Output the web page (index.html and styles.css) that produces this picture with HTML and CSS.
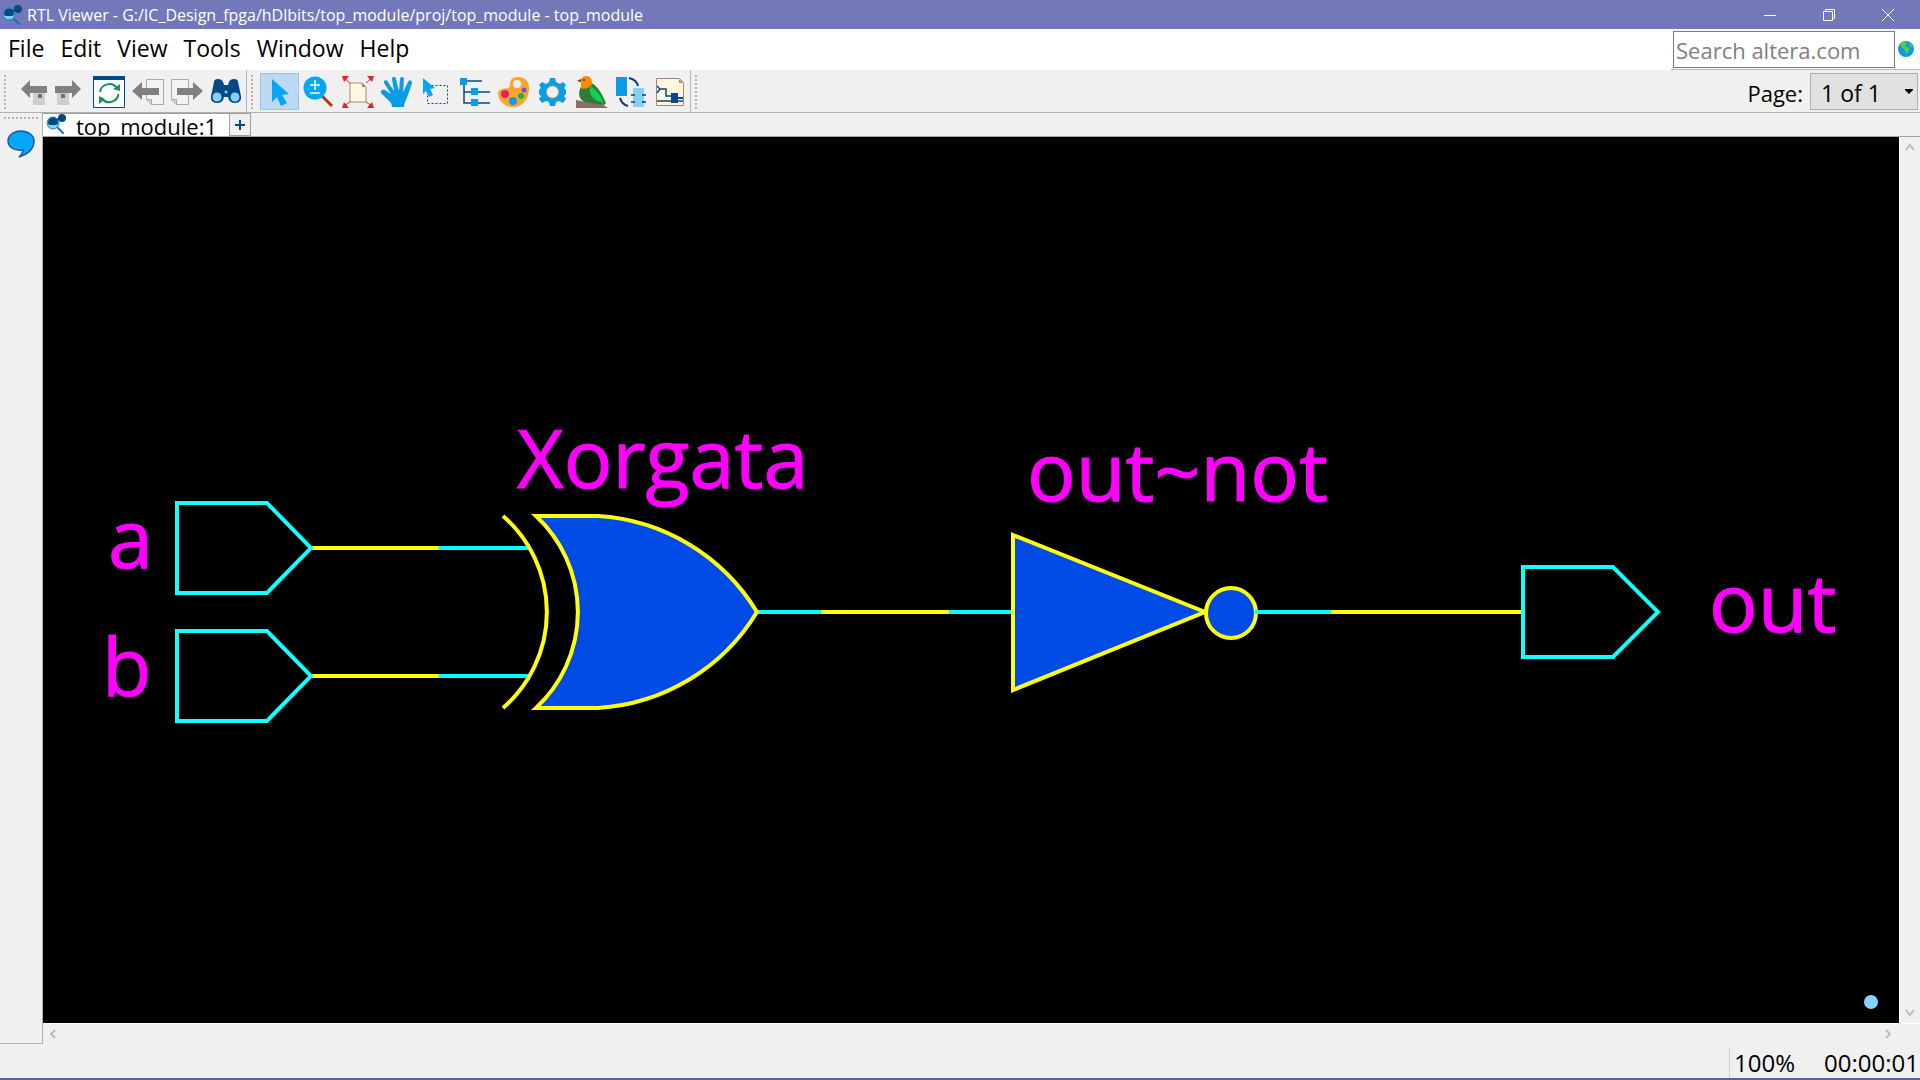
FILE: index.html
```html
<!DOCTYPE html>
<html lang="en">
<head>
    <meta charset="UTF-8">
    <meta name="viewport" content="width=device-width, initial-scale=1.0">
    <title>RTL Viewer</title>
    <link rel="stylesheet" href="styles.css">
</head>
<body>
    <!-- shared icon -->
    <svg class="defs" width="0" height="0">
        <symbol id="viewer" viewBox="0 0 20 20">
            <path d="M11 13l6 6" stroke="#1f6fb0" stroke-width="2" stroke-linecap="round"/>
            <circle cx="7" cy="9" r="6" fill="#7fd0f7" stroke="#1c80c4" stroke-width="1"/>
            <path d="M2 9a5 5 0 0 1 10-1q0 3-2 3H4q-2 0-2-2z" fill="#044a86"/>
            <path d="M11 6l5-3" stroke="#044a86" stroke-width="2"/>
            <circle cx="16" cy="4" r="4" fill="#044a86"/>
        </symbol>
    </svg>

    <header class="titlebar">
        <svg class="app-icon"><use href="#viewer"/></svg>
        <h1>RTL Viewer - G:/IC_Design_fpga/hDlbits/top_module/proj/top_module - top_module</h1>
        <div class="window-btns">
            <button aria-label="Minimize"><svg viewBox="0 0 14 14"><path d="M1 7.500h12"/></svg></button>
            <button aria-label="Restore"><svg viewBox="0 0 14 14"><path d="M1.500 3.500h9v9h-9zM3.500 3.500v-2h9v9h-2"/></svg></button>
            <button aria-label="Close"><svg viewBox="0 0 14 14"><path d="M1 1l12 12M13 1L1 13"/></svg></button>
        </div>
    </header>

    <div class="menubar">
        <nav>
            <button>File</button>
            <button>Edit</button>
            <button>View</button>
            <button>Tools</button>
            <button>Window</button>
            <button>Help</button>
        </nav>
        <div class="search">
            <input type="text" placeholder="Search altera.com" aria-label="Search altera.com">
            <button aria-label="Search">
                <svg viewBox="0 0 16 16">
                    <circle cx="8" cy="8" r="8" fill="#0d9be8"/>
                    <path d="M4 1l4 0 1 2-2 1 1 2-2-1 3 1 3 2-2 3-2 2-1-4-3-2-2-4z" fill="#5cc940"/>
                    <path d="M11 2l3 2 1 3-2-1-2-2z" fill="#5cc940"/>
                </svg>
            </button>
        </div>
    </div>

    <div class="toolbar">
        <div class="tool-group">
            <span class="handle"></span>
            <button class="tool small" aria-label="Undo">
                <svg viewBox="0 0 32 32">
                    <path d="M15 14h12v15H15z" fill="#cfcfcf"/>
                    <path d="M3 13l9-9v6h17v7H12v5z" fill="#808080"/>
                    <path d="M17 17h10v10H17z" fill="#cfcfcf"/><path d="M20 18h4v4h-4z" fill="#707070"/>
                </svg>
            </button>
            <button class="tool small" aria-label="Redo">
                <svg viewBox="0 0 32 32">
                    <path d="M5 14h12v15H5z" fill="#cfcfcf"/>
                    <path d="M29 13l-9-9v6H3v7h17v5z" fill="#808080"/>
                    <path d="M6 17h10v10H6z" fill="#cfcfcf"/><path d="M9 18h4v4H9z" fill="#707070"/>
                </svg>
            </button>
            <span class="spacer"></span>
            <button class="tool" aria-label="Refresh">
                <svg viewBox="0 0 32 32">
                    <path d="M.5.500h31v31H.5z" fill="#fff" stroke="#044a86"/>
                    <path d="M0 0h32v4H0z" fill="#044a86"/>
                    <path d="M7 16a9.500 9.500 0 0 1 17-4M9 23a9.500 9.500 0 0 0 16.500-5" fill="none" stroke="#149650" stroke-width="2"/>
                    <path d="M27 8v7l-7-2zM6 28v-8l6 3z" fill="#149650"/>
                </svg>
            </button>
            <button class="tool" aria-label="Previous page">
                <svg viewBox="0 0 32 32">
                    <path d="M14.500 3.500h17v25H19l-4.500-5z" fill="#f3f3f3" stroke="#a8a8a8"/>
                    <path d="M14.500 23.500l5 0v5" fill="#d0d0d0" stroke="#a8a8a8"/>
                    <path d="M0 15l10-9v6h17v7H10v5z" fill="#808080"/>
                </svg>
            </button>
            <button class="tool" aria-label="Next page">
                <svg viewBox="0 0 32 32">
                    <path d="M.5 3.500h17v25H5l-4.500-5z" fill="#f3f3f3" stroke="#a8a8a8"/>
                    <path d="M.5 23.500h5v5" fill="#d0d0d0" stroke="#a8a8a8"/>
                    <path d="M32 15l-10-9v6H6v7h16v5z" fill="#808080"/>
                </svg>
            </button>
            <button class="tool" aria-label="Find">
                <svg viewBox="0 0 32 32">
                    <path d="M4 6q0-3 4-3t5 3l1 3h4l1-3q1-3 5-3t4 3l3 14q1 7-6 7-6 0-7-6h-4q-1 6-7 6-7 0-6-7z" fill="#044a86"/>
                    <circle cx="7" cy="21" r="4.500" fill="#86d0f5"/><circle cx="25" cy="21" r="4.500" fill="#86d0f5"/>
                    <circle cx="16" cy="16" r="1.500" fill="#86d0f5"/>
                </svg>
            </button>
        </div>
        <div class="tool-group">
            <span class="handle"></span>
            <button class="tool active" aria-label="Selection tool" aria-pressed="true">
                <svg viewBox="0 0 32 32"><path d="M8 3l17 15-7 1 5 8-6 3-4-9-5 5z" fill="#06a6f7"/></svg>
            </button>
            <button class="tool" aria-label="Zoom tool">
                <svg viewBox="0 0 32 32">
                    <path d="M19 20l10 10" stroke="#b33c0e" stroke-width="3"/>
                    <circle cx="12" cy="12" r="11.500" fill="#06a6f7"/>
                    <path d="M12 4v10M7 9h10M7 17h10" stroke="#fff" stroke-width="1.500"/>
                </svg>
            </button>
            <button class="tool" aria-label="Fit in window">
                <svg viewBox="0 0 32 32">
                    <path d="M8 7h12l4 4v15H8z" fill="#fff8dc" stroke="#a1887f"/>
                    <path d="M20 7v4h4z" fill="#a1887f"/>
                    <path d="M8 7L2 2M24 7l6-5M8 26l-6 4M24 26l6 4" stroke="#e3222a"/>
                    <path d="M0 0h7L2 6zM32 0h-7l5 6zM0 32h7l-5-6zM32 32h-7l5-6z" fill="#e3222a"/>
                </svg>
            </button>
            <button class="tool" aria-label="Hand tool">
                <svg viewBox="0 0 32 32">
                    <path d="M11 31c0-4-2-5-5-8l-6-6c-1-3 2-4 4-3l6 4L3 7c-1-3 3-4 4-1l6 9-2-12c0-3 4-3 4 0l3 12 1-12c1-3 4-2 4 0l-1 13 5-10c1-3 4-2 4 1l-4 12c-2 5-4 8-4 12z" fill="#0a9de5"/>
                </svg>
            </button>
            <button class="tool" aria-label="Area selection">
                <svg viewBox="0 0 32 32">
                    <path d="M7.500 9.500h20v18h-20z" fill="none" stroke="#1c3f8c" stroke-dasharray="2 2"/>
                    <path d="M3 2l12 10-5 1 3 6-4 2-3-6-3 3z" fill="#06a6f7"/>
                </svg>
            </button>
            <button class="tool" aria-label="Netlist navigator">
                <svg viewBox="0 0 32 32">
                    <path d="M6 5h17M5 8v19h8M5 16h8M19 16h12M19 27h12" fill="none" stroke="#044a86" stroke-width="1.500"/>
                    <path d="M1 2h7v7H1zM12 12h7v7h-7zM12 23h7v7h-7z" fill="#0a9de5"/>
                </svg>
            </button>
            <button class="tool" aria-label="Color settings">
                <svg viewBox="0 0 32 32">
                    <path d="M4 13c4-1 7 0 8-3 0-4 0-9 8-9 8 0 12 6 11 13-1 10-7 17-15 17C7 31 1 26 0 18c0-3 1-4 4-5z" fill="#fba52c"/>
                    <circle cx="19" cy="8" r="4" fill="#f0f0f0"/>
                    <circle cx="7" cy="18" r="4" fill="#e91e63"/><circle cx="15" cy="25" r="4" fill="#0a9de5"/>
                    <circle cx="23" cy="20" r="3" fill="#1bb53c"/><circle cx="26" cy="14" r="2.500" fill="#7c4ddb"/>
                </svg>
            </button>
            <button class="tool" aria-label="Display settings">
                <svg viewBox="0 0 32 32">
                    <path d="M13 2h5l1 4 4 2 3-2 3 3-2 3 2 2v4l-2 2 2 3-3 4-4-2-3 1-1 4h-5l-1-4-3-1-4 2-3-4 2-3-2-2v-4l2-2-2-3 3-3 4 2 3-2z" fill="#0a9de5"/>
                    <circle cx="15.500" cy="16" r="6" fill="#f2f2f2" stroke="#d9b15b"/>
                </svg>
            </button>
            <button class="tool" aria-label="Bird's eye view">
                <svg viewBox="0 0 32 32">
                    <path d="M0 24c8 1 12 3 20 3 5 0 8 2 12 5H0z" fill="#8d6e63"/>
                    <path d="M6 9c-5 8-4 17 8 18l14 2 2-2C26 18 22 10 15 7z" fill="#2e7d32"/>
                    <path d="M14 10c6 3 11 10 14 17-9-2-16-7-14-17z" fill="#0fd053"/>
                    <path d="M1 5l4-2c2-4 11-5 11 4 0 4-7 7-11 5V6z" fill="#fb8c00"/>
                    <path d="M1 5l4-2v3z" fill="#5d4037"/><circle cx="8" cy="4" r="1" fill="#333"/>
                </svg>
            </button>
            <button class="tool" aria-label="Swap view">
                <svg viewBox="0 0 32 32">
                    <path d="M1 1h11v19H1z" fill="#0a9de5"/><path d="M18 12h11v19H18z" fill="#86d0f5"/>
                    <path d="M14 2c5 1 8 4 9 8M5 22c1 4 4 7 8 8" fill="none" stroke="#053b75" stroke-width="2"/>
                    <path d="M16 19h4M16 26h4M27 19h4M27 26h4" stroke="#053b75" stroke-width="1.500"/>
                </svg>
            </button>
            <button class="tool" aria-label="Schematic">
                <svg viewBox="0 0 32 32">
                    <path d="M2.500 2.500h23l4 4v23h-27z" fill="#fff8dc" stroke="#a1887f"/>
                    <path d="M25 3v4h4z" fill="#a1887f"/>
                    <path d="M3 10l3 3-3 4M6 13h6v7h7M3 25h26" fill="none" stroke="#044a86" stroke-width="1.500"/>
                    <path d="M17 17h7v10h-7zM24 21h5v2h-5z" fill="#044a86"/>
                </svg>
            </button>
        </div>
        <div class="tool-group"><span class="handle"></span></div>
        <div class="page-picker">
            <label for="page">Page:</label>
            <div class="select-box">
                <select id="page">
                    <option>1 of 1</option>
                </select>
                <svg viewBox="0 0 8 5"><path d="M0 0h8v1L4 5 0 1z"/></svg>
            </div>
        </div>
    </div>

    <main class="main">
        <aside class="dock">
            <span class="dock-handle"></span>
            <button aria-label="Messages">
                <svg viewBox="0 0 28 28">
                    <path d="M14 1c7 0 13 4 13 10 0 8-6 13-15 16 3-3 4-5 4-7C7 21 1 17 1 11 1 5 7 1 14 1z" fill="#06a6f7" stroke="#1858a8" stroke-width="1.500"/>
                </svg>
            </button>
        </aside>

        <section class="workspace">
            <div class="tabs">
                <button class="tab"><svg><use href="#viewer"/></svg><span>top_module:1</span></button>
                <button class="tab-add" aria-label="New tab"><svg viewBox="0 0 10 10"><path d="M5 0v10M0 5h10"/></svg></button>
            </div>
            <div class="view">
                <svg class="schematic" viewBox="43 137 1856 886">
                    <!-- wires -->
                    <path class="net" d="M311 548H439M311 676H439M821 612H949M1331 612H1523"/>
                    <path class="stub" d="M439 548H528M439 676H528M757 612H821M949 612H1013M1256 612H1331"/>
                    <!-- ports -->
                    <path class="port" d="M177 503H267L311 548L267 593H177Z"/>
                    <path class="port" d="M177 631H267L311 676L267 721H177Z"/>
                    <path class="port" d="M1523 567H1613L1658 612L1613 657H1523Z"/>
                    <!-- xor -->
                    <path class="arc" d="M503 516A127 127 0 0 1 503 708"/>
                    <path class="gate" d="M536 516H598A200 200 0 0 1 757 612A200 200 0 0 1 598 708H536A131 131 0 0 0 536 516Z"/>
                    <!-- inverter -->
                    <path class="gate" d="M1013 535L1205 612L1013 690Z"/>
                    <circle class="gate" cx="1231" cy="613" r="25"/>
                    <path class="stub" d="M1255 612H1262"/>
                    <!-- labels -->
                    <text x="108" y="568">a</text>
                    <text x="102" y="696">b</text>
                    <text x="517" y="488">Xorgata</text>
                    <text x="1027" y="501">out~not</text>
                    <text x="1709" y="632">out</text>
                    <circle class="marker" cx="1871" cy="1002" r="7"/>
                </svg>
                <div class="vscroll">
                    <button aria-label="Scroll up"><svg viewBox="0 0 10 10"><path d="M1 8l4-5 4 5"/></svg></button>
                    <button aria-label="Scroll down"><svg viewBox="0 0 10 10"><path d="M1 2l4 5 4-5"/></svg></button>
                </div>
            </div>
            <div class="hscroll">
                <button aria-label="Scroll left"><svg viewBox="0 0 10 10"><path d="M7 1L3 5l4 4"/></svg></button>
                <button aria-label="Scroll right"><svg viewBox="0 0 10 10"><path d="M3 1l4 4-4 4"/></svg></button>
            </div>
        </section>
    </main>

    <footer class="statusbar">
        <span class="zoom">100%</span>
        <span>00:00:01</span>
    </footer>
</body>
</html>
```
FILE: styles.css
```css
* {
    margin: 0;
    padding: 0;
    box-sizing: border-box;
}
body {
    display: flex;
    flex-direction: column;
    height: 100vh;
    overflow: hidden;
    font-family: "Open Sans", sans-serif;
    font-size: 23px;
    line-height: 32px;
    color: #000;
    background-color: #f0f0f0;
    border-bottom: 2px solid #5c6199;
}
button, input, select {
    font: inherit;
    color: inherit;
    border: none;
    background: none;
}
svg {
    display: block;
}
.defs {
    position: absolute;
}

/* title bar */
.titlebar {
    display: flex;
    align-items: center;
    height: 29px;
    padding-left: 2px;
    background-color: #7378b8;
    color: #fff;
}
.app-icon {
    width: 20px;
    height: 20px;
    margin-right: 5px;
}
.titlebar h1 {
    flex: 1;
    font-size: 16px;
    font-weight: normal;
    line-height: 28px;
}
.window-btns {
    display: flex;
    padding-right: 3px;
}
.window-btns button {
    display: flex;
    align-items: center;
    justify-content: center;
    width: 59px;
    height: 28px;
}
.window-btns svg {
    width: 14px;
    height: 14px;
    fill: none;
    stroke: #fff;
}

/* menu */
.menubar {
    display: flex;
    justify-content: space-between;
    height: 41px;
    background-color: #fff;
}
.menubar nav {
    display: flex;
    gap: 16px;
    padding: 3px 0 0 8px;
}
.menubar nav button {
    height: 32px;
}
.search {
    display: flex;
    align-items: center;
    gap: 3px;
    padding: 2px 6px 2px 2px;
    border-bottom: 1px solid #b8b8b8;
}
.search input {
    width: 222px;
    height: 37px;
    padding: 2px 2px 0;
    font-size: 22px;
    border: 1px solid #7a7a7a;
}
.search input::placeholder {
    color: #808080;
    opacity: 1;
}
.search svg {
    width: 16px;
    height: 16px;
}

/* toolbar */
.toolbar {
    display: flex;
    height: 43px;
    border-bottom: 1px solid #b0b0b0;
}
.tool-group {
    display: flex;
    align-items: center;
    padding: 1px 1px 0 4px;
    border-right: 1px solid #b8b8b8;
}
.tool-group:nth-child(3) {
    border: none;
}
.handle {
    width: 2px;
    height: 34px;
    margin-right: 7px;
    background: repeating-linear-gradient(#b4b4b4 0 2px, transparent 2px 4px);
}
.tool {
    display: flex;
    align-items: center;
    justify-content: center;
    width: 39px;
    height: 37px;
    border: 1px solid transparent;
}
.tool svg {
    width: 32px;
    height: 32px;
}
.tool.small {
    width: 34px;
}
.tool.small:nth-child(2) {
    margin-left: 4px;
}
.spacer {
    width: 4px;
}
.tool.active {
    background-color: #bedaf2;
    border-color: #94c5ee;
}
.page-picker {
    display: flex;
    align-items: center;
    gap: 7px;
    margin-left: auto;
    padding: 1px 2px 0 0;
    font-size: 22px;
}
.page-picker label {
    padding-top: 2px;
}
.select-box {
    position: relative;
}
.select-box select {
    width: 108px;
    height: 37px;
    padding: 2px 0 0 10px;
    appearance: none;
    font-size: 23px;
    background-color: #e1e1e1;
    border: 1px solid #adadad;
}
.select-box svg {
    position: absolute;
    right: 5px;
    top: 16px;
    width: 8px;
    height: 5px;
    pointer-events: none;
}

/* main area */
.main {
    flex: 1;
    display: flex;
    min-height: 0;
}
.dock {
    width: 43px;
    padding: 4px 4px 0;
    border-right: 1px solid #b0b0b0;
    border-bottom: 1px solid #b0b0b0;
}
.dock-handle {
    display: block;
    height: 2px;
    background: repeating-linear-gradient(90deg, #b4b4b4 0 2px, transparent 2px 4px);
}
.dock button {
    margin: 11px 0 0 3px;
}
.dock svg {
    width: 28px;
    height: 28px;
}
.workspace {
    flex: 1;
    display: flex;
    flex-direction: column;
    min-width: 0;
}
.tabs {
    display: flex;
    height: 24px;
    border-bottom: 1px solid #a0a0a0;
}
.tab {
    display: flex;
    gap: 10px;
    width: 187px;
    padding-left: 3px;
    overflow: hidden;
    font-size: 22px;
    background-color: #fff;
    border-top: 1px solid #a0a0a0;
    border-right: 1px solid #a0a0a0;
}
.tab svg {
    width: 20px;
    height: 20px;
}
.tab span {
    line-height: 24px;
}
.tab-add {
    display: flex;
    align-items: center;
    justify-content: center;
    width: 21px;
    border: 1px solid #a0a0a0;
    border-left: none;
}
.tab-add svg {
    width: 10px;
    height: 10px;
    stroke: #044a86;
    stroke-width: 2;
}
.view {
    flex: 1;
    display: flex;
    min-height: 0;
}
.schematic {
    flex: 1;
    min-width: 0;
    height: 100%;
    background-color: #000;
    fill: none;
    stroke-width: 4;
}
.schematic text {
    font-size: 81px;
    fill: #f0f;
    stroke: #f0f;
    stroke-width: 1;
}
.net {
    stroke: #ff0;
}
.stub {
    stroke: #0ff;
}
.port {
    stroke: #1ff;
}
.arc, .gate {
    stroke: #ff1;
}
.gate {
    fill: #004be6;
}
.marker {
    fill: #80d4ff;
}
.vscroll {
    display: flex;
    flex-direction: column;
    justify-content: space-between;
    width: 21px;
    padding: 5px;
    border-left: 1px solid #fff;
}
.hscroll {
    display: flex;
    justify-content: space-between;
    height: 21px;
    padding: 5px 27px 5px 5px;
    border-top: 1px solid #fff;
}
.vscroll svg, .hscroll svg {
    width: 10px;
    height: 10px;
    fill: none;
    stroke: #bcbcbc;
    stroke-width: 2;
}

/* status bar */
.statusbar {
    display: flex;
    justify-content: flex-end;
    gap: 29px;
    height: 34px;
    padding: 3px 1px 0 0;
    font-size: 24px;
}
.zoom {
    padding-left: 4px;
    border-left: 1px solid #d0d0d0;
}
```
